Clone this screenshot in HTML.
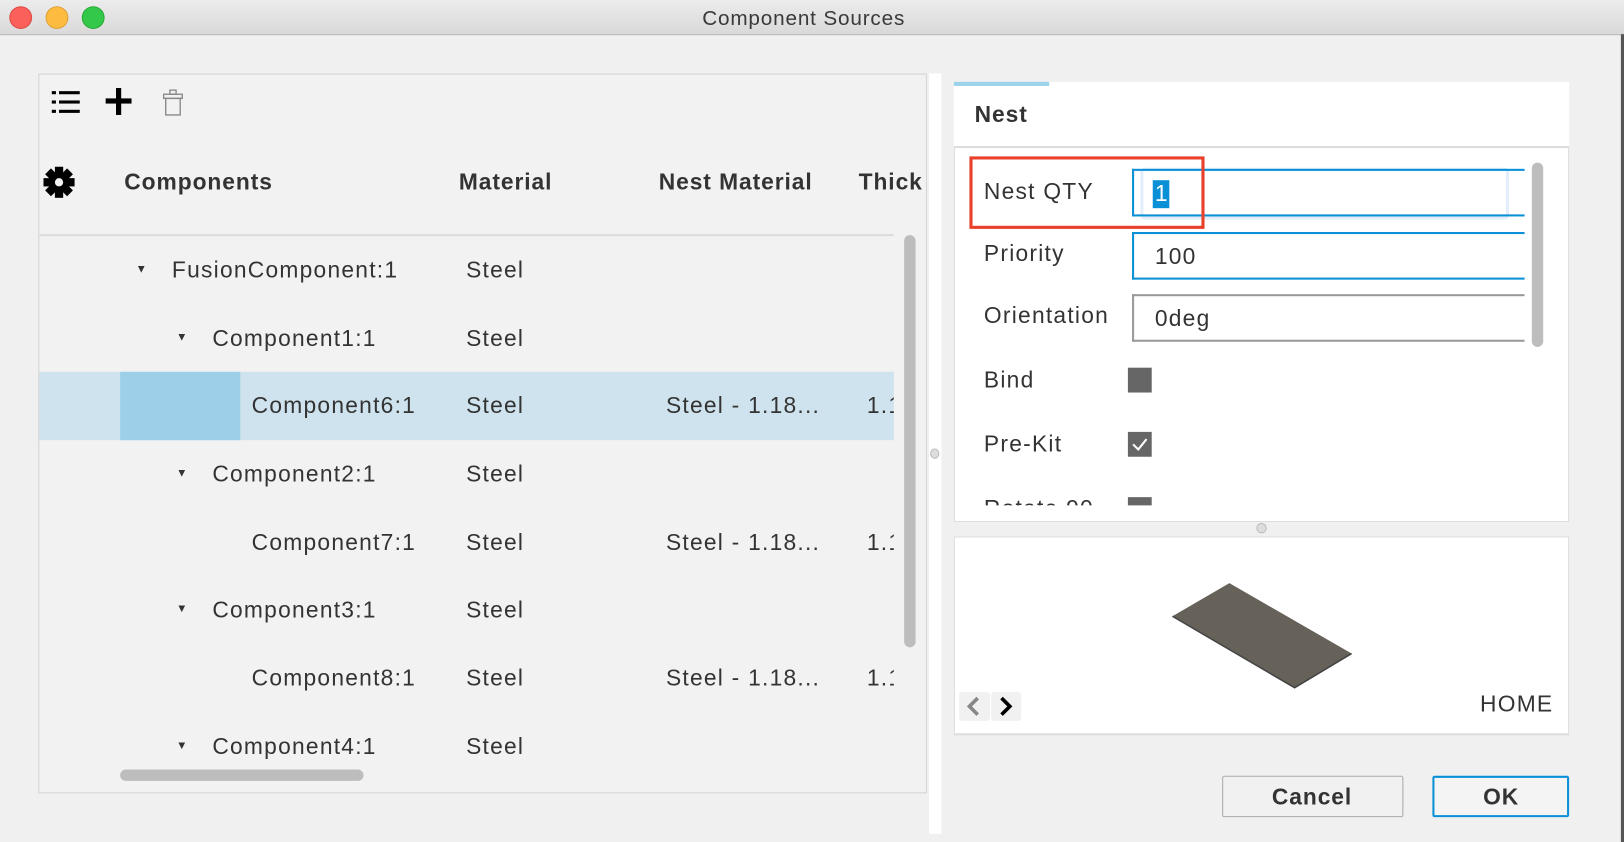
<!DOCTYPE html>
<html><head><meta charset="utf-8"><style>
html,body{margin:0;padding:0;width:1624px;height:842px;overflow:hidden;background:#f0f0f0}
#w{position:absolute;left:0;top:0;width:1568px;height:813px;transform:scale(1.035714);transform-origin:0 0;font-family:"Liberation Sans",sans-serif;color:#333;background:#f0f0f0}
.a{position:absolute}
.t{position:absolute;font-size:22px;white-space:nowrap;line-height:1;letter-spacing:1.2px}
.b{font-weight:bold;letter-spacing:0.9px}
</style></head><body><div id="w">
<div class="a" style="left:0;top:0;width:1568px;height:33px;background:linear-gradient(#ececec,#d9d9d9);border-bottom:1px solid #b5b5b5"></div>
<div class="a" style="left:9px;top:6px;width:22px;height:22px;border-radius:50%;background:#fc605b;border:1px solid #de4a43;box-sizing:border-box"></div>
<div class="a" style="left:44px;top:6px;width:22px;height:22px;border-radius:50%;background:#fdbc40;border:1px solid #dea035;box-sizing:border-box"></div>
<div class="a" style="left:79px;top:6px;width:22px;height:22px;border-radius:50%;background:#34c84a;border:1px solid #27aa35;box-sizing:border-box"></div>
<div class="t" style="left:678px;top:8px;font-size:20px;color:#3a3a3a;letter-spacing:0.8px">Component Sources</div>
<div class="a" style="left:1565px;top:33px;width:3px;height:780px;background:#555"></div>

<div class="a" style="left:37px;top:71px;width:856px;height:693px;border:1px solid #d4d4d4;background:#f2f2f2"></div>
<svg class="a" style="left:48px;top:86px" width="32" height="26"><rect x="2" y="2" width="4" height="3"/><rect x="9" y="2" width="20" height="3"/><rect x="2" y="11" width="4" height="3"/><rect x="9" y="11" width="20" height="3"/><rect x="2" y="20" width="4" height="3"/><rect x="9" y="20" width="20" height="3"/></svg>
<svg class="a" style="left:100px;top:84px" width="30" height="28"><rect x="12" y="1" width="5" height="26"/><rect x="2" y="11" width="25" height="5"/></svg>
<svg class="a" style="left:155px;top:86px" width="24" height="26" fill="none" stroke="#888" stroke-width="1.3"><rect x="3" y="5" width="18" height="4"/><rect x="5" y="9" width="14" height="16"/><rect x="9" y="1" width="6" height="4"/></svg>
<svg class="a" style="left:41px;top:160px" width="32" height="32" viewBox="0 0 32 32"><g transform="translate(16 16)"><circle r="10"/><rect x="-4" y="-15" width="8" height="30"/><rect x="-15" y="-4" width="30" height="8"/><rect x="-4" y="-15" width="8" height="30" transform="rotate(45)"/><rect x="-4" y="-15" width="8" height="30" transform="rotate(-45)"/><circle r="4" fill="#f2f2f2"/></g></svg>
<div class="t b" style="left:120px;top:165px">Components</div>
<div class="t b" style="left:443px;top:165px">Material</div>
<div class="t b" style="left:636px;top:165px">Nest Material</div>
<div class="t b" style="left:829px;top:165px;width:64px;overflow:hidden">Thick</div>
<div class="a" style="left:38px;top:226px;width:825px;height:2px;background:#dcdcdc"></div>
<div class="a" style="left:38px;top:359px;width:825px;height:66px;background:#cfe3ee"></div>
<div class="a" style="left:116px;top:359px;width:116px;height:66px;background:#9dcfe9"></div>
<div class="t" style="left:131px;top:255px;font-size:11px">▼</div><div class="t" style="left:166px;top:250px">FusionComponent:1</div><div class="t" style="left:450px;top:250px">Steel</div>
<div class="t" style="left:170px;top:321px;font-size:11px">▼</div><div class="t" style="left:205px;top:316px">Component1:1</div><div class="t" style="left:450px;top:316px">Steel</div>
<div class="t" style="left:243px;top:381px">Component6:1</div><div class="t" style="left:450px;top:381px">Steel</div><div class="t" style="left:643px;top:381px">Steel - 1.18...</div><div class="t" style="left:837px;top:381px;width:26px;overflow:hidden">1.1</div>
<div class="t" style="left:170px;top:452px;font-size:11px">▼</div><div class="t" style="left:205px;top:447px">Component2:1</div><div class="t" style="left:450px;top:447px">Steel</div>
<div class="t" style="left:243px;top:513px">Component7:1</div><div class="t" style="left:450px;top:513px">Steel</div><div class="t" style="left:643px;top:513px">Steel - 1.18...</div><div class="t" style="left:837px;top:513px;width:26px;overflow:hidden">1.1</div>
<div class="t" style="left:170px;top:583px;font-size:11px">▼</div><div class="t" style="left:205px;top:578px">Component3:1</div><div class="t" style="left:450px;top:578px">Steel</div>
<div class="t" style="left:243px;top:644px">Component8:1</div><div class="t" style="left:450px;top:644px">Steel</div><div class="t" style="left:643px;top:644px">Steel - 1.18...</div><div class="t" style="left:837px;top:644px;width:26px;overflow:hidden">1.1</div>
<div class="t" style="left:170px;top:715px;font-size:11px">▼</div><div class="t" style="left:205px;top:710px">Component4:1</div><div class="t" style="left:450px;top:710px">Steel</div>
<div class="a" style="left:873px;top:227px;width:11px;height:398px;border-radius:6px;background:#bdbdbd"></div>
<div class="a" style="left:116px;top:743px;width:235px;height:11px;border-radius:6px;background:#bdbdbd"></div>

<div class="a" style="left:897px;top:71px;width:12px;height:734px;background:#fff"></div>
<div class="a" style="left:898px;top:433px;width:9px;height:10px;border-radius:50%;background:#ddd;border:1px solid #bbb;box-sizing:border-box"></div>

<div class="a" style="left:921px;top:79px;width:594px;height:62px;background:#fff"></div>
<div class="a" style="left:921px;top:79px;width:92px;height:4px;background:#9dd3ea"></div>
<div class="t b" style="left:941px;top:100px">Nest</div>
<div class="a" style="left:921px;top:141px;width:592px;height:360px;background:#fff;border:1px solid #ddd;border-top:2px solid #ddd"></div>
<div class="a" style="left:1101px;top:162px;width:350px;height:44px;border:3px solid #e3eefc;border-radius:4px"></div>
<div class="a" style="left:1093px;top:163px;width:377px;height:42px;border:2px solid #0a90d6;border-right:none"></div>
<div class="a" style="left:1113px;top:174px;width:16px;height:27px;background:#0a90d6"></div>
<div class="t" style="left:1115px;top:176px;color:#fff">1</div>
<div class="t" style="left:950px;top:174px">Nest QTY</div>
<div class="a" style="left:936px;top:151px;width:221px;height:64px;border:3px solid #e8402a"></div>
<div class="t" style="left:950px;top:234px">Priority</div>
<div class="a" style="left:1093px;top:224px;width:377px;height:42px;border:2px solid #0a90d6;border-right:none"></div>
<div class="t" style="left:1115px;top:237px">100</div>
<div class="t" style="left:950px;top:294px">Orientation</div>
<div class="a" style="left:1093px;top:284px;width:377px;height:42px;border:2px solid #9a9a9a;border-right:none"></div>
<div class="t" style="left:1115px;top:297px">0deg</div>
<div class="a" style="left:1479px;top:157px;width:11px;height:178px;border-radius:6px;background:#bdbdbd"></div>
<div class="t" style="left:950px;top:356px">Bind</div>
<div class="a" style="left:1089px;top:355px;width:23px;height:24px;background:#666"></div>
<div class="t" style="left:950px;top:418px">Pre-Kit</div>
<div class="a" style="left:1089px;top:417px;width:23px;height:24px;background:#666"></div>
<svg class="a" style="left:1089px;top:417px" width="23" height="24"><path d="M5 12 L10 17 L18 7" stroke="#fff" stroke-width="2" fill="none"/></svg>
<div class="a" style="left:950px;top:478px;width:170px;height:10px;overflow:hidden"><div class="t" style="left:0;top:2px">Rotate 90</div><div class="a" style="left:139px;top:2px;width:23px;height:20px;background:#666"></div></div>
<div class="a" style="left:1213px;top:505px;width:10px;height:10px;border-radius:50%;background:#ddd;border:1px solid #bbb;box-sizing:border-box"></div>
<div class="a" style="left:921px;top:518px;width:592px;height:189px;background:#fff;border:1px solid #ddd;border-bottom:2px solid #ddd"></div>
<svg class="a" style="left:0;top:0" width="1568" height="813"><polygon points="1187,563 1305,631 1250,664 1132,595" fill="#66625a"/><polyline points="1132,595 1250,664 1305,631" stroke="#444" stroke-width="1.5" fill="none"/></svg>
<div class="a" style="left:926px;top:668px;width:30px;height:28px;background:#f1f1f1;border-radius:3px"></div>
<div class="a" style="left:957px;top:668px;width:29px;height:28px;background:#f1f1f1;border-radius:3px"></div>
<svg class="a" style="left:926px;top:668px" width="60" height="28"><path d="M18 6 L10 14 L18 22" stroke="#888" stroke-width="3.5" fill="none"/><path d="M41 6 L49 14 L41 22" stroke="#000" stroke-width="3.5" fill="none"/></svg>
<div class="t" style="left:1429px;top:669px">HOME</div>

<div class="a" style="left:1180px;top:749px;width:173px;height:38px;border:1px solid #aaa;background:#f1f1f1;border-radius:2px"></div>
<div class="t b" style="left:1228px;top:759px">Cancel</div>
<div class="a" style="left:1383px;top:749px;border:2px solid #0a90d6;background:#f4f4f4;border-radius:2px;box-sizing:border-box;height:40px;width:132px"></div>
<div class="t b" style="left:1432px;top:759px">OK</div>
</div></body></html>
